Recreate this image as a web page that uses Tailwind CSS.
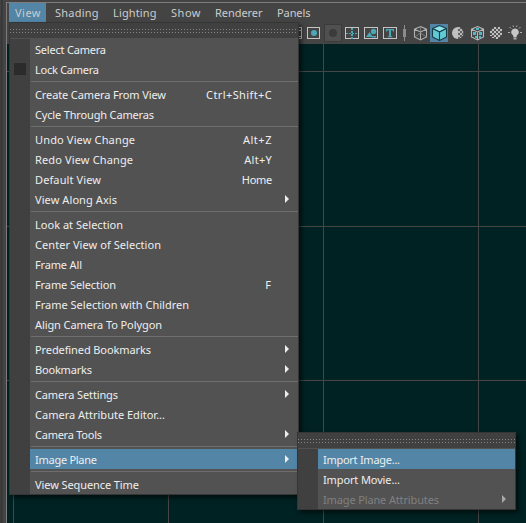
<!DOCTYPE html>
<html lang="en">
<head>
<meta charset="utf-8">
<title>Viewport</title>
<script src="https://cdn.jsdelivr.net/npm/@tailwindcss/browser@4"></script>
</head>
<body class="w-[526px] h-[523px] overflow-hidden bg-[#444] font-['Noto_Sans','Open_Sans',sans-serif] text-[11px] leading-5 text-[#eee] whitespace-nowrap">
<div class="relative w-[526px] h-[523px] flex overflow-hidden">
  <div class="w-[6px] shrink-0 bg-[#444] flex"><i class="w-px mt-[17px] bg-[#3d3d3d]"></i><i class="w-px bg-[#373737]"></i><i class="w-px bg-[#3b3b3b]"></i></div>
  <div class="mt-[2px] w-[520px] border-t border-l border-[#7d7d7d] flex flex-col">
    <nav class="h-[19px] pl-[2px] flex text-[#ccc] leading-[20px]">
      <div class="w-[37px] pl-[6px] bg-[#5285a6]"><span data-w="25">View</span></div>
      <div class="w-[58px] pl-[9px]"><span data-w="43">Shading</span></div>
      <div class="w-[58px] pl-[9px]"><span data-w="43">Lighting</span></div>
      <div class="w-[44px] pl-[9px]"><span data-w="29">Show</span></div>
      <div class="w-[62px] pl-[9px]"><span data-w="47">Renderer</span></div>
      <div class="pl-[9px]"><span data-w="33">Panels</span></div>
    </nav>
    <div class="h-[22px] flex justify-end">
      <svg width="230" height="22" viewBox="296 22 230 22" shape-rendering="crispEdges">
        <g fill="none" stroke="#c4c4c4"><path d="M290 27.5h11.500v11H290M290 30.500h11M290 36.500h11"/><rect x="307.500" y="27.500" width="12" height="11"/><rect x="345.500" y="27.500" width="13" height="11"/><rect x="364.500" y="27.500" width="13" height="11"/><rect x="383.500" y="27.500" width="13" height="11"/></g>
        <rect x="324.500" y="24.500" width="17" height="17" fill="#505050" stroke="#3b3b3b"/>
        <g shape-rendering="auto" fill="#49a8b4"><circle cx="314" cy="33" r="3"/><circle cx="333" cy="33" r="4" fill="#3b3b3b"/><path d="M366 37l3.500-5 3.500 5zM372 36h4v1.500h-4z"/><circle cx="373.500" cy="31.500" r="2.700"/><path d="M386 29h8v2.500h-1l-.5-1.200H391V36l1.200.4v.8h-4.400v-.8L389 36v-5.700h-1.500l-.5 1.200h-1z"/></g>
        <path d="M346 33.500h12" stroke="#49a8b4" stroke-dasharray="2 1"/><path d="M352 28v11" stroke="#49a8b4" stroke-width="2" stroke-dasharray="2 1"/>
        <path d="M404.500 25v16" stroke="#8c8c8c"/><rect x="403" y="29" width="3" height="8" fill="#8c8c8c"/>
        <g shape-rendering="auto" fill="none" stroke="#b0b0b0" stroke-width="1.100"><path d="M420.500 26.500l6 2.700v7.800l-6 3-6-3v-7.800zM414.500 29.200l6 2.800 6-2.800M420.500 32v8"/><path d="M420.500 26.500v6M414.500 37l6-4 6 4" stroke="#858585" stroke-width=".8"/></g>
        <rect x="430" y="24" width="18" height="18" fill="#5285a6"/>
        <g shape-rendering="auto" stroke="#183e48" stroke-width="1.100" stroke-linejoin="round"><path d="M439.500 25.500l7 3-7 3.500-7-3.500z" fill="#8ce3eb"/><path d="M432.500 28.500l7 3.500v8.500l-7-3.500z" fill="#60cbd7"/><path d="M446.500 28.500l-7 3.500v8.500l7-3.500z" fill="#60cbd7"/></g>
        <path d="M458 27a6 6 0 0 0 0 12z" fill="#c0c0c0" shape-rendering="auto"/>
        <path d="M458 27a6 6 0 0 1 0 12z" fill="#606060" shape-rendering="auto"/>
        <path d="M458 27h2v2h-2zM460 29h2v2h-2zM458 31h2v2h-2zM462 31h1v2h-1zM460 33h2v2h-2zM458 35h2v2h-2zM462 35h1v1h-1zM460 37h1v1h-1z" fill="#b8b8b8"/>
        <path d="M477.500 26.500l6 2.700v7.800l-6 3-6-3v-7.800zM471.500 29.200l6 2.800 6-2.800M477.500 32v8" shape-rendering="auto" fill="none" stroke="#b8b8b8" stroke-width="1.100"/>
        <g fill="#50bac8"><path d="M476 28h3v2h-3zM473 32h3v3h-3zM479 32h3v3h-3zM475 36h2v2h-2zM479 36h2v2h-2z"/></g>
        <circle cx="496" cy="33" r="6" fill="#555" shape-rendering="auto"/>
        <path d="M494 27h2v2h-2zM498 27h2v2h-2zM492 29h2v2h-2zM496 29h2v2h-2zM500 29h2v2h-2zM490 31h2v2h-2zM494 31h2v2h-2zM498 31h2v2h-2zM492 33h2v2h-2zM496 33h2v2h-2zM500 33h2v2h-2zM490 35h2v1h-2zM494 35h2v2h-2zM498 35h2v2h-2zM492 37h2v1h-2zM496 37h2v2h-2z" fill="#c0c0c0"/>
        <g shape-rendering="auto" fill="#c6c6c6"><path d="M515 28.500a3.600 3.600 0 0 1 2 6.700l-.6 2.200h-2.800l-.6-2.200a3.600 3.600 0 0 1 2-6.700z"/><path d="M513.500 38h3v1.500h-3z" fill="#aaa"/><path d="M508 32.500h2M520 32.500h2M509.500 27l1.500 1.500M520.500 27l-1.500 1.500M513 25.500l.5 1.500M517 25.500l-.5 1.500" stroke="#b0b0b0"/></g>
      </svg>
    </div>
    <svg class="block" width="519" height="479" viewBox="7 44 519 479" shape-rendering="crispEdges"><path fill="#002222" d="M7 44h519v479H7z"/><path d="M13.500 44v479M168.500 44v479M323.500 44v479M478.500 44v479M7 71.500h519M7 226.500h519M7 380.500h519" stroke="#454545"/></svg>
  </div>

  <!-- View menu -->
  <div class="absolute left-[9px] top-[22px] w-[290px] h-[473px] bg-[#525252] border border-[#353535] shadow-[3px_3px_4px_rgba(0,0,0,0.5)] flex flex-col">
    <svg class="block shrink-0" width="288" height="16" shape-rendering="crispEdges"><path d="M0 0h288v16H0z" fill="#404040"/><path d="M0 6.500h287M0 9.500h287" stroke="#868686" stroke-dasharray="1 2"/><path d="M0 15.500h288" stroke="#525252"/></svg>
    <div class="flex-1 flex">
      <div class="w-5 shrink-0 bg-[#404040] pt-6 pl-1"><div class="w-3 h-3 bg-[#2b2b2b]"></div></div>
      <div class="flex-1">
        <div class="h-5 pl-[5px] pt-px"><span data-w="70.500">Select Camera</span></div>
        <div class="h-5 pl-[5px] pt-px"><span data-w="63.500">Lock Camera</span></div>
        <div class="h-[5px] pt-[2px] pl-px"><hr class="border-[#6e6e6e]"></div>
        <div class="h-5 pl-[5px] pr-[26px] pt-px flex justify-between"><span data-w="130.500">Create Camera From View</span><span data-w="65">Ctrl+Shift+C</span></div>
        <div class="h-5 pl-[5px] pt-px"><span data-w="118.500">Cycle Through Cameras</span></div>
        <div class="h-[5px] pt-[2px] pl-px"><hr class="border-[#6e6e6e]"></div>
        <div class="h-5 pl-[5px] pr-[26px] pt-px flex justify-between"><span data-w="99.500">Undo View Change</span><span data-w="28">Alt+Z</span></div>
        <div class="h-5 pl-[5px] pr-[26px] pt-px flex justify-between"><span data-w="97.500">Redo View Change</span><span data-w="27">Alt+Y</span></div>
        <div class="h-5 pl-[5px] pr-[26px] pt-px flex justify-between"><span data-w="65.500">Default View</span><span data-w="30">Home</span></div>
        <div class="h-5 pl-[5px] pr-[9px] pt-px flex justify-between"><span data-w="81.500">View Along Axis</span><svg class="mt-[5px]" width="4" height="8"><path d="M0 0L4 4L0 8z" fill="#eee"/></svg></div>
        <div class="h-[5px] pt-[2px] pl-px"><hr class="border-[#6e6e6e]"></div>
        <div class="h-5 pl-[5px] pt-px"><span data-w="87.500">Look at Selection</span></div>
        <div class="h-5 pl-[5px] pt-px"><span data-w="125.500">Center View of Selection</span></div>
        <div class="h-5 pl-[5px] pt-px"><span data-w="46.500">Frame All</span></div>
        <div class="h-5 pl-[5px] pr-[27px] pt-px flex justify-between"><span data-w="80.500">Frame Selection</span><span data-w="6">F</span></div>
        <div class="h-5 pl-[5px] pt-px"><span data-w="153.500">Frame Selection with Children</span></div>
        <div class="h-5 pl-[5px] pt-px"><span data-w="126.500">Align Camera To Polygon</span></div>
        <div class="h-[5px] pt-[2px] pl-px"><hr class="border-[#6e6e6e]"></div>
        <div class="h-5 pl-[5px] pr-[9px] pt-px flex justify-between"><span data-w="115.500">Predefined Bookmarks</span><svg class="mt-[5px]" width="4" height="8"><path d="M0 0L4 4L0 8z" fill="#eee"/></svg></div>
        <div class="h-5 pl-[5px] pr-[9px] pt-px flex justify-between"><span data-w="56.500">Bookmarks</span><svg class="mt-[5px]" width="4" height="8"><path d="M0 0L4 4L0 8z" fill="#eee"/></svg></div>
        <div class="h-[5px] pt-[2px] pl-px"><hr class="border-[#6e6e6e]"></div>
        <div class="h-5 pl-[5px] pr-[9px] pt-px flex justify-between"><span data-w="82.500">Camera Settings</span><svg class="mt-[5px]" width="4" height="8"><path d="M0 0L4 4L0 8z" fill="#eee"/></svg></div>
        <div class="h-5 pl-[5px] pt-px"><span data-w="129.500">Camera Attribute Editor...</span></div>
        <div class="h-5 pl-[5px] pr-[9px] pt-px flex justify-between"><span data-w="66.500">Camera Tools</span><svg class="mt-[5px]" width="4" height="8"><path d="M0 0L4 4L0 8z" fill="#eee"/></svg></div>
        <div class="h-[5px] pt-[2px] pl-px"><hr class="border-[#6e6e6e]"></div>
        <div class="h-5 pl-[5px] pr-[9px] pt-px flex justify-between bg-[#5285a6]"><span data-w="61.500">Image Plane</span><svg class="mt-[5px]" width="4" height="8"><path d="M0 0L4 4L0 8z" fill="#eee"/></svg></div>
        <div class="h-[5px] pt-[2px] pl-px"><hr class="border-[#6e6e6e]"></div>
        <div class="h-5 pl-[5px] pt-px"><span data-w="103.500">View Sequence Time</span></div>
      </div>
    </div>
  </div>

  <!-- Image Plane submenu -->
  <div class="absolute left-[297px] top-[432px] w-[219px] h-[78px] bg-[#525252] border border-[#353535] shadow-[3px_3px_4px_rgba(0,0,0,0.5)] flex flex-col">
    <svg class="block shrink-0" width="217" height="16" shape-rendering="crispEdges"><path d="M0 0h217v16H0z" fill="#404040"/><path d="M0 6.500h217M0 9.500h217" stroke="#868686" stroke-dasharray="1 2"/><path d="M0 15.500h217" stroke="#525252"/></svg>
    <div class="flex-1 flex">
      <div class="w-5 shrink-0 bg-[#404040]"></div>
      <div class="flex-1">
        <div class="h-5 pl-[5px] pt-px bg-[#5285a6]"><span data-w="76.500">Import Image...</span></div>
        <div class="h-5 pl-[5px] pt-px"><span data-w="76.500">Import Movie...</span></div>
        <div class="h-5 pl-[5px] pr-[9px] pt-px flex justify-between text-[#808080]"><span data-w="115.500">Image Plane Attributes</span><svg class="mt-[5px]" width="4" height="8"><path d="M0 0L4 4L0 8z" fill="#a8a8a8"/></svg></div>
      </div>
    </div>
  </div>
</div>
<script>
const ctx = document.createElement('canvas').getContext('2d');
ctx.font = '11px "Noto Sans", "Open Sans", sans-serif';
for (const s of document.querySelectorAll('[data-w]')) {
  const n = s.textContent.length, w = ctx.measureText(s.textContent).width;
  if (n > 1) { s.style.letterSpacing = ((+s.dataset.w + 0.5 - w) / (n - 1)) + 'px'; }
}
</script>
</body>
</html>
